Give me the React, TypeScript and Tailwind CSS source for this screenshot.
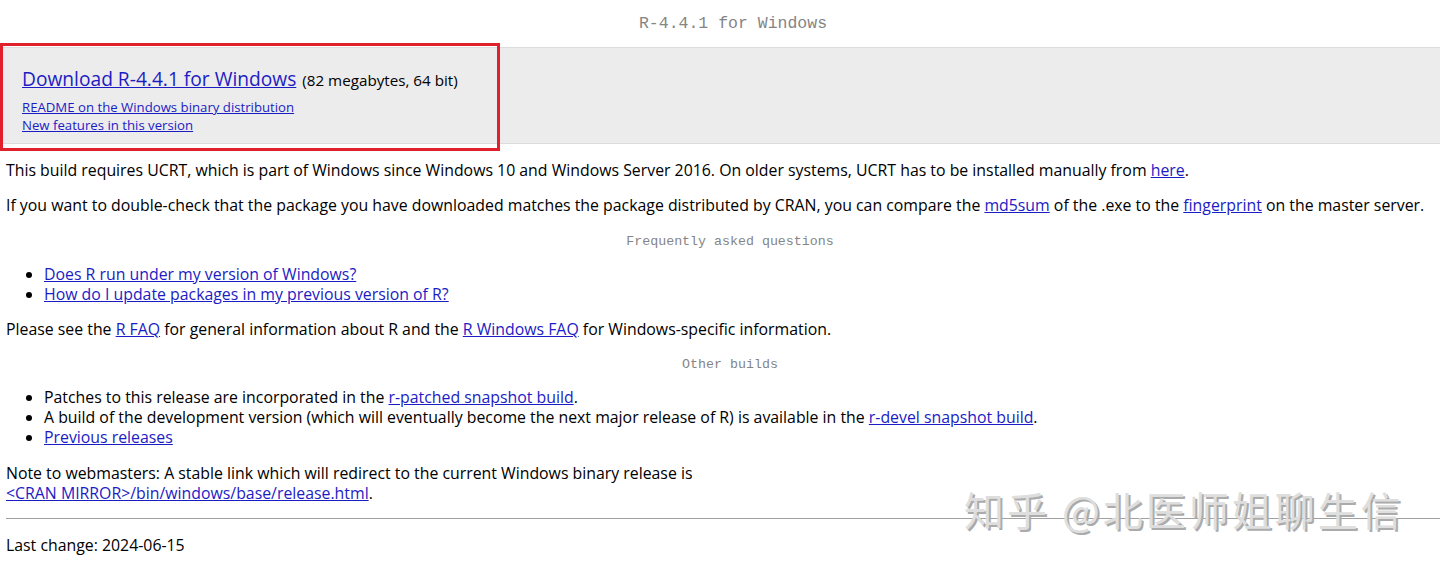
import React from 'react';

const sans = "font-['Open_Sans','Noto_Sans',sans-serif]";
const mono = "font-['Liberation_Mono','DejaVu_Sans_Mono',monospace]";
const link = 'text-[#1c1cc4] underline';

const faq = ['Does R run under my version of Windows?', 'How do I update packages in my previous version of R?'];

export default function App() {
  return (
    <div className={`${sans} relative h-[570px] w-[1440px] overflow-hidden bg-white text-[15.85px] text-black`}>
      {/* Title */}
      <h1 className={`${mono} pt-[13px] pl-[26px] text-center text-[16.5px] leading-[22px] font-normal text-[#858585]`}>R-4.4.1 for Windows</h1>

      {/* Download box */}
      <div className="relative mt-[12px] ml-[3px] border-y border-[#dcdcdc] bg-[#ececec] pt-[17px] pb-[9px] pl-[19px]">
        <div className="flex items-baseline gap-[6px] leading-[28px]">
          <a className={`${link} text-[19.2px]`}>Download R-4.4.1 for Windows</a>
          <span className="text-[15.2px]">(82 megabytes, 64 bit)</span>
        </div>
        <div className="mt-[4px] flex flex-col text-[13.2px] leading-[18px]">
          <a className={link}>README on the Windows binary distribution</a>
          <a className={link}>New features in this version</a>
        </div>
        <div className="pointer-events-none absolute top-[-5px] left-[-3px] h-[108px] w-[500px] border-[3px] border-[#e0202a]" />
      </div>

      <div className="px-[6px]">
        <p className="mt-[15px] leading-[22px]">
          This build requires UCRT, which is part of Windows since Windows 10 and Windows Server 2016. On older systems, UCRT has to be installed manually from <a className={link}>here</a>.
        </p>
        <p className="mt-[13px] leading-[22px]">
          If you want to double-check that the package you have downloaded matches the package distributed by CRAN, you can compare the <a className={link}>md5sum</a> of the .exe to the <a className={link}>fingerprint</a> on the master server.
        </p>

        <h2 className={`${mono} mt-[17px] pl-[20px] text-center text-[13.3px] leading-[18px] text-[#858585]`}>Frequently asked questions</h2>
        <ul className="mt-[13px] list-disc pl-[38px] leading-[20px]">
          {faq.map((q) => (
            <li key={q}><a className={link}>{q}</a></li>
          ))}
        </ul>

        <p className="mt-[14px] leading-[22px]">
          Please see the <a className={link}>R FAQ</a> for general information about R and the <a className={link}>R Windows FAQ</a> for Windows-specific information.
        </p>

        <h2 className={`${mono} mt-[16px] pl-[20px] text-center text-[13.3px] leading-[18px] text-[#858585]`}>Other builds</h2>
        <ul className="mt-[13px] list-disc pl-[38px] leading-[20px]">
          <li>Patches to this release are incorporated in the <a className={link}>r-patched snapshot build</a>.</li>
          <li>A build of the development version (which will eventually become the next major release of R) is available in the <a className={link}>r-devel snapshot build</a>.</li>
          <li><a className={link}>Previous releases</a></li>
        </ul>

        <p className="mt-[16px] leading-[20px]">
          Note to webmasters: A stable link which will redirect to the current Windows binary release is
          <br />
          <a className={link}>&lt;CRAN MIRROR&gt;/bin/windows/base/release.html</a>.
        </p>
      </div>

      <hr className="mt-[15px] ml-[6px] border-t border-[#a0a0a0]" />
      <p className="mt-[15px] px-[6px] leading-[22px]">Last change: 2024-06-15</p>

      {/* watermark */}
      <div className="pointer-events-none absolute top-[484px] left-[964px] font-['Noto_Sans_CJK_SC',sans-serif] text-[40px] leading-[50px] tracking-[3px] text-[#dedede] [text-shadow:2px_2px_0_#ababab]">
        知乎 @北医师姐聊生信
      </div>
    </div>
  );
}
